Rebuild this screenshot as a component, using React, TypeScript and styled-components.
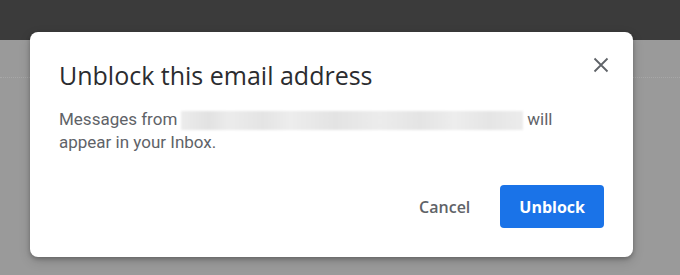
import React from "react";
import styled, { createGlobalStyle } from "styled-components";

const GlobalStyle = createGlobalStyle`
  html, body {
    margin: 0;
    padding: 0;
    background: #9a9a9a;
    font-family: Roboto, "Liberation Sans", Arial, sans-serif;
  }
`;

const Page = styled.div`
  width: 680px;
  height: 275px;
  position: relative;
  overflow: hidden;
  background: #9a9a9a;
`;

const TopBar = styled.div`
  height: 40px;
  background: #3b3b3b;
`;

const Toolbar = styled.div`
  height: 37px;
  border-bottom: 1px dotted #a8a8a8;
`;

const Dialog = styled.div`
  position: absolute;
  left: 30px;
  top: 32px;
  width: 603px;
  height: 225px;
  box-sizing: border-box;
  background: #fff;
  border-radius: 8px;
  box-shadow: 0 2px 4px rgba(0, 0, 0, 0.25), 0 4px 12px rgba(0, 0, 0, 0.15);
  padding: 24px 29px 29px 29px;
  display: flex;
  flex-direction: column;
`;

const Header = styled.div`
  display: flex;
  justify-content: space-between;
  align-items: flex-start;
`;

const Title = styled.h2`
  margin: 2px 0 0;
  font-family: "Open Sans", Roboto, sans-serif;
  font-weight: 400;
  font-size: 25px;
  line-height: 34px;
  color: #2b2c2f;
`;

const Close = styled.button`
  border: none;
  background: none;
  padding: 0;
  margin: 0 -6px 0 0;
  width: 18px;
  height: 18px;
  cursor: pointer;
  display: flex;
`;

const Body = styled.div`
  margin: 16px 0 0;
  font-size: 17px;
  line-height: 23px;
  color: #5f6368;
`;

const Line = styled.div`
  display: flex;
  align-items: center;
  gap: 4px;
`;

/* blurred-out address, as in the screenshot */
const Hidden = styled.span`
  display: block;
  width: 342px;
  height: 19px;
  margin-top: 1px;
  background: linear-gradient(
    90deg,
    #ececec 0%,
    #e2e2e2 8%,
    #ececec 14%,
    #e4e4e4 24%,
    #ededed 32%,
    #e3e3e3 45%,
    #ececec 58%,
    #e4e4e4 70%,
    #ededed 80%,
    #e5e5e5 90%,
    #ececec 100%
  );
  filter: blur(1px);
`;

const Actions = styled.div`
  margin-top: auto;
  display: flex;
  justify-content: flex-end;
  align-items: center;
  gap: 6px;
`;

const Button = styled.button<{ $primary?: boolean }>`
  height: 43px;
  border: none;
  border-radius: 4px;
  padding: 0 ${(p) => (p.$primary ? "19px" : "24px")};
  font-family: "Open Sans", Roboto, sans-serif;
  font-size: 16px;
  font-weight: ${(p) => (p.$primary ? 700 : 600)};
  background: ${(p) => (p.$primary ? "#1a73e8" : "transparent")};
  color: ${(p) => (p.$primary ? "#fff" : "#5f6368")};
  cursor: pointer;
`;

export default function App() {
  return (
    <>
      <GlobalStyle />
      <Page>
        <TopBar />
        <Toolbar />
        <Dialog>
          <Header>
            <Title>Unblock this email address</Title>
            <Close aria-label="Close">
              <svg width="18" height="18" viewBox="0 0 18 18">
                <path
                  d="M2.5 2.5 L15.5 15.5 M15.5 2.5 L2.5 15.5"
                  stroke="#5f6368"
                  strokeWidth="1.8"
                  fill="none"
                />
              </svg>
            </Close>
          </Header>
          <Body>
            <Line>
              <span>Messages from</span>
              <Hidden />
              <span>will</span>
            </Line>
            <Line>appear in your Inbox.</Line>
          </Body>
          <Actions>
            <Button>Cancel</Button>
            <Button $primary>Unblock</Button>
          </Actions>
        </Dialog>
      </Page>
    </>
  );
}
